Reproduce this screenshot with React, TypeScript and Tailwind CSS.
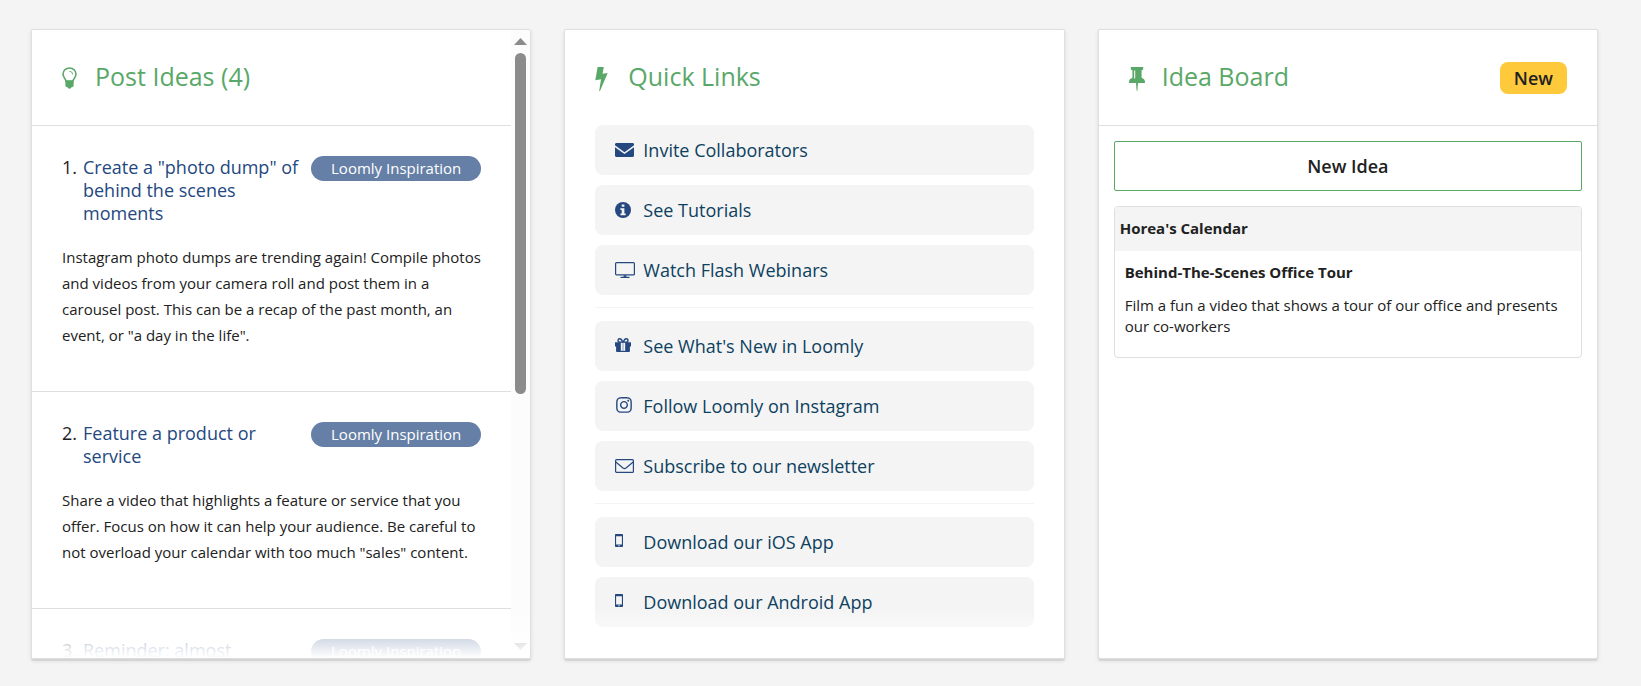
import type { ReactNode } from "react";
import { FaInstagram } from "react-icons/fa";

function BulbIcon() {
  return (
    <svg width="15" height="22" viewBox="0 0 15 22" aria-hidden="true">
      <path
        d="M7.500 1C3.800 1 1 3.700 1 7.100c0 2.200 1.100 3.400 2.100 4.900.6.900.9 1.600 1 2.500h6.800c.1-.9.400-1.600 1-2.500 1-1.500 2.100-2.700 2.100-4.900C14 3.700 11.200 1 7.500 1z"
        fill="none"
        stroke="currentColor"
        strokeWidth="1.600"
      />
      <path d="M7.500 4.400c1.800 0 3.100 1.200 3.100 2.900" fill="none" stroke="currentColor" strokeWidth="1" />
      <path d="M3.400 13.200h8.200v5.600c0 .7-.5 1.200-1.200 1.200h-.8c-.3 1-1 1.700-2.100 1.700s-1.800-.7-2.100-1.700h-.8c-.7 0-1.200-.5-1.200-1.200z" fill="currentColor" />
    </svg>
  );
}

function BoltIcon() {
  return (
    <svg width="13" height="24" viewBox="0 0 13 24" aria-hidden="true">
      <path d="M2.600 0h6.200L7.600 6.800 12.700 5.900 5 24H4.200L6 12.200.3 13.300z" fill="currentColor" />
    </svg>
  );
}

function PinIcon() {
  return (
    <svg width="16" height="24" viewBox="0 0 16 24" aria-hidden="true">
      <path
        d="M1.800 0h12.400v2.600l-1.600.7v7.500c2 .7 3.400 2.200 3.400 4.200v1H9l-.6 7.800h-.8L7 16H0v-1c0-2 1.400-3.500 3.400-4.200V3.300l-1.600-.7z"
        fill="currentColor"
      />
      <path d="M5.700 3.500v8" stroke="#fff" strokeWidth="1" />
    </svg>
  );
}

function MailSolidIcon() {
  return (
    <svg width="19" height="14" viewBox="0 0 19 14" fill="currentColor" aria-hidden="true">
      <path d="M1.500 0h16c.8 0 1.500.6 1.500 1.400v.8L9.500 9.300 0 2.200v-.8C0 .6.700 0 1.500 0z" />
      <path d="M0 4.200l9.500 6.900L19 4.200v8.600c0 .7-.6 1.200-1.300 1.200H1.300C.6 14 0 13.500 0 12.800z" />
    </svg>
  );
}

function MailLineIcon() {
  return (
    <svg width="19" height="14" viewBox="0 0 19 14" fill="none" stroke="currentColor" strokeWidth="1.200" aria-hidden="true">
      <rect x=".6" y=".6" width="17.800" height="12.800" rx="1" />
      <path d="M.8 3l7.200 6c.9.700 2.100.7 3 0l7.200-6" />
    </svg>
  );
}

function InfoIcon() {
  return (
    <svg width="16" height="16" viewBox="0 0 16 16" aria-hidden="true">
      <circle cx="8" cy="8" r="8" fill="currentColor" />
      <path d="M6.700 2.500h2.700v2.300H6.700zM5.400 6.200h4v5.200h1.300v1.900H5.400v-1.900h1.300V8.100H5.400z" fill="#f4f4f4" />
    </svg>
  );
}

function GiftIcon() {
  return (
    <svg width="16" height="14" viewBox="0 0 16 14" aria-hidden="true">
      <path d="M0 4.300h16v4.200h-1.100V13c0 .6-.4 1-1 1H2.100c-.6 0-1-.4-1-1V8.500H0z" fill="currentColor" />
      <path d="M7.700 4.200H5C3.800 4.200 3 3.500 3 2.500S3.800.8 4.800.8c1.500 0 2.300 1.500 2.900 3.400zM8.300 4.200H11c1.200 0 2-.7 2-1.700S12.200.8 11.200.8c-1.500 0-2.300 1.500-2.900 3.400z" fill="none" stroke="currentColor" strokeWidth="1.400" />
      <path d="M5.800 4.800h4.400v8H5.800z" fill="#f4f4f4" />
      <path d="M7.300 4.800h1.400v8H7.300z" fill="currentColor" fillOpacity=".35" />
    </svg>
  );
}

function ScreenIcon() {
  return (
    <svg width="20" height="16" viewBox="0 0 20 16" fill="none" stroke="currentColor" strokeWidth="1.200" aria-hidden="true">
      <rect x=".6" y=".6" width="18.800" height="12.300" rx="1" />
      <path d="M5.500 15.400h9M10 13v2.400" />
      <path d="M8.500 14.200h3" />
    </svg>
  );
}

function PhoneIcon() {
  return (
    <svg width="8" height="13" viewBox="0 0 8 13" aria-hidden="true">
      <path
        fillRule="evenodd"
        d="M1 0h6c.6 0 1 .4 1 1v11c0 .6-.4 1-1 1H1c-.6 0-1-.4-1-1V1c0-.6.400-1 1-1zm.1 2.200v8.300h5.800V2.200zM3.300 11.200v1h1.400v-1z"
        fill="currentColor"
      />
    </svg>
  );
}

function Card({ title, icon, badge, ruled, fade, aside, children }: {
  title: string;
  icon: ReactNode;
  badge?: ReactNode;
  ruled?: boolean;
  fade?: boolean;
  aside?: ReactNode;
  children: ReactNode;
}) {
  return (
    <section className="relative flex min-h-0 min-w-0 overflow-hidden rounded-xs border border-[#dfdfdf] bg-white shadow-[0_2px_1px_rgba(0,0,0,0.07),0_2px_4px_rgba(0,0,0,0.1)]">
      <div className="min-w-0 flex-1">
        <header className={"flex h-[96px] items-center justify-between px-[30px] " + (ruled ? "border-b border-[#dfdfdf]" : "-mb-px")}>
          <h2 className="flex items-center pb-1 text-[25px] leading-8 text-[#5aa868]">
            <span className="flex h-[30px] w-[33px] items-start pt-1.5">{icon}</span>
            {title}
          </h2>
          {badge}
        </header>
        {children}
      </div>
      {aside}
      {fade && <div className="pointer-events-none absolute inset-x-0 bottom-0 h-[50px] bg-linear-to-b from-white/0 from-0% via-white/70 via-60% to-white" />}
    </section>
  );
}

const ideas = [
  {
    title: 'Create a "photo dump" of behind the scenes moments',
    text: 'Instagram photo dumps are trending again! Compile photos and videos from your camera roll and post them in a carousel post. This can be a recap of the past month, an event, or "a day in the life".',
  },
  {
    title: "Feature a product or service",
    text: 'Share a video that highlights a feature or service that you offer. Focus on how it can help your audience. Be careful to not overload your calendar with too much "sales" content.',
  },
  { title: "Reminder: almost", text: "" },
];

const linkGroups = [
  [
    { label: "Invite Collaborators", icon: <MailSolidIcon /> },
    { label: "See Tutorials", icon: <InfoIcon /> },
    { label: "Watch Flash Webinars", icon: <ScreenIcon /> },
  ],
  [
    { label: "See What's New in Loomly", icon: <GiftIcon />, raised: true },
    { label: "Follow Loomly on Instagram", icon: <FaInstagram size={18} />, raised: true },
    { label: "Subscribe to our newsletter", icon: <MailLineIcon /> },
  ],
  [
    { label: "Download our iOS App", icon: <PhoneIcon />, raised: true },
    { label: "Download our Android App", icon: <PhoneIcon />, raised: true },
  ],
];

function ScrollRail() {
  return (
    <div aria-hidden="true" className="flex w-[19px] shrink-0 flex-col items-center bg-[#fcfcfc] py-2 text-[#8b8b8b]">
      <svg width="13" height="7" viewBox="0 0 13 7"><path d="M6.500 0L13 7H0z" fill="currentColor" /></svg>
      <div className="mt-2 h-[341px] w-[11px] rounded-full bg-[#8b8b8b]" />
      <svg className="mt-auto" width="13" height="7" viewBox="0 0 13 7"><path d="M6.500 7L0 0h13z" fill="currentColor" /></svg>
    </div>
  );
}

export default function App() {
  return (
    <main className="grid h-screen grid-cols-3 grid-rows-[minmax(0,1fr)] gap-[33px] bg-[#f4f4f4] pt-[29px] pr-[43px] pb-[27px] pl-[31px] font-['Open_Sans',sans-serif] text-[#212121]">
      <Card title="Post Ideas (4)" icon={<BulbIcon />} ruled fade aside={<ScrollRail />}>
        <ol>
          {ideas.map((idea, i) => (
            <li key={idea.title} className="border-b border-[#dfdfdf] px-[30px] pt-[30px] pb-[43px]">
              <div className="flex items-start justify-between">
                <h3 className="flex w-[242px] shrink-0 text-[18px] leading-[23px]">
                  <span className="w-[21px] shrink-0">{i + 1}.</span>
                  <a href="#" className="text-[#24487f]">{idea.title}</a>
                </h3>
                <span className="rounded-full bg-[#667fa6] px-5 text-[15px] leading-[25px] whitespace-nowrap text-white">Loomly Inspiration</span>
              </div>
              <p className="-mr-2 mt-[19px] text-[15px] leading-[26px]">{idea.text}</p>
            </li>
          ))}
        </ol>
      </Card>

      <Card title="Quick Links" icon={<BoltIcon />} fade>
        <nav className="px-[30px]">
          {linkGroups.map((group, i) => (
            <ul key={i} className="mb-3 flex flex-col gap-2.5 border-[#f4f4f4] not-first:border-t not-first:pt-[13px]">
              {group.map((link) => (
                <li key={link.label}>
                  <a href="#" className="flex h-[50px] items-center rounded-lg bg-[#f4f4f4] px-5 text-[18px] text-[#0d4160]">
                    <span className={"flex w-7 text-[#24487f] " + ("raised" in link ? "pb-[3px]" : "")}>{link.icon}</span>
                    {link.label}
                  </a>
                </li>
              ))}
            </ul>
          ))}
        </nav>
      </Card>

      <Card
        title="Idea Board"
        icon={<PinIcon />}
        ruled
        badge={<span className="rounded-lg bg-[#ffc93c] px-3.5 text-[18px] leading-8 font-semibold">New</span>}
      >
        <div className="flex flex-col gap-[15px] p-[15px]">
          <button type="button" className="h-[50px] rounded-xs border border-[#5aa868] text-[18px] font-semibold">
            New Idea
          </button>
          <article className="overflow-hidden rounded-sm border border-[#dfdfdf] text-[15px]">
            <h3 className="bg-[#f4f4f4] px-[5px] pt-[11px] pb-[13px] leading-5 font-bold">Horea's Calendar</h3>
            <div className="px-2.5 pt-[11px] pb-5 leading-[21px]">
              <h4 className="mb-3 font-bold">Behind-The-Scenes Office Tour</h4>
              <p>Film a fun a video that shows a tour of our office and presents our co-workers</p>
            </div>
          </article>
        </div>
      </Card>
    </main>
  );
}
